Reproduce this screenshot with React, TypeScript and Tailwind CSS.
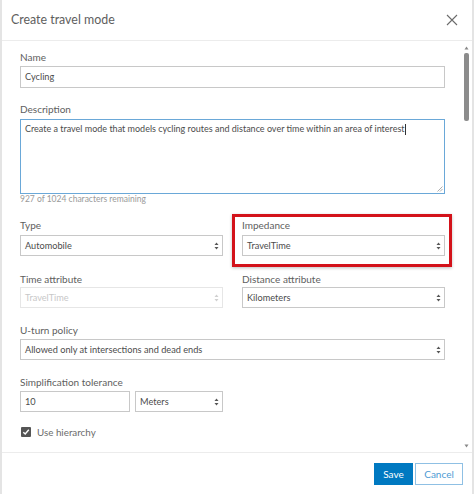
import React from 'react';

const font = { fontFamily: '"Lato", "Noto Sans", sans-serif' };

function Arrows({ disabled = false }: { disabled?: boolean }) {
    const c = disabled ? '#d0d0d0' : '#555';
    return (
        <svg width="5" height="8" viewBox="0 0 5 8" className="shrink-0">
            <path d="M2.5 0.5 L4.5 3 L0.5 3 Z" fill={c} />
            <path d="M2.5 7.5 L4.5 5 L0.5 5 Z" fill={c} />
        </svg>
    );
}

function Label({ children, className = '' }: { children: React.ReactNode; className?: string }) {
    return <div className={`text-[10px] leading-[14px] text-[#5e5e5e] ${className}`}>{children}</div>;
}

function Select({ value, disabled = false, className = '' }: { value: string; disabled?: boolean; className?: string }) {
    return (
        <div className={`h-[21px] flex items-center justify-between pl-[4px] pr-[3px] border ${disabled ? 'border-[#e6e6e6] text-[#c8c8c8]' : 'border-[#c8c8c8] text-[#4c4c4c]'} bg-white text-[9.2px] ${className}`}>
            <span>{value}</span>
            <Arrows disabled={disabled} />
        </div>
    );
}

export default function App() {
    return (
        <div style={font} className="w-[474px] h-[494px] bg-white flex flex-col border-x-[2px] border-[#e4e4e4] overflow-hidden">
            {/* header */}
            <div className="h-[41px] shrink-0 flex items-center justify-between pl-[9px] pr-[14px] border-b border-[#ececec]">
                <span className="text-[12.4px] text-[#5e5e5e]">Create travel mode</span>
                <svg width="12" height="12" viewBox="0 0 12 12">
                    <path d="M1 1 L11 11 M11 1 L1 11" stroke="#6b6b6b" strokeWidth="1.1" />
                </svg>
            </div>

            {/* body */}
            <div className="flex-1 flex min-h-0">
                <div className="flex-1 pl-[18px] pt-[9px]">
                    <div className="w-[425px]">
                        <Label>Name</Label>
                        <div className="mt-[2px] h-[22px] border border-[#c8c8c8] flex items-center pl-[4px] text-[9.2px] text-[#4c4c4c]">Cycling</div>

                        <Label className="mt-[14px]">Description</Label>
                        <div className="mt-[3px] h-[75px] border border-[#6aa8d8] relative pl-[4px] pt-[3px] text-[9px] leading-[12px] text-[#4c4c4c] whitespace-nowrap">
                            <span>Create a travel mode that models cycling routes and distance over time within an area of interest</span>
                            <span className="inline-block w-px h-[11px] bg-[#333] align-middle"></span>
                            <svg width="6" height="6" viewBox="0 0 6 6" className="absolute right-[1px] bottom-[1px]">
                                <path d="M5.5 0.5 L0.5 5.5 M5.5 3 L3 5.5" stroke="#999" strokeWidth="0.8" />
                            </svg>
                        </div>
                        <div className="text-[8.5px] leading-[11px] text-[#9a9a9a]">927 of 1024 characters remaining</div>

                        <div className="mt-[13px] grid grid-cols-2 gap-x-[19px]">
                            <div>
                                <Label>Type</Label>
                                <Select value="Automobile" className="mt-[3px]" />
                            </div>
                            <div className="-ml-[10px] -mr-[7px] -mt-[4px] -mb-[11px] border-[3px] border-[#d3121a] pl-[7px] pr-[4px] pt-[1px] pb-[8px] shadow-[0_1px_3px_rgba(0,0,0,0.25)]">
                                <Label>Impedance</Label>
                                <Select value="TravelTime" className="mt-[3px]" />
                            </div>
                        </div>

                        <div className="mt-[16px] grid grid-cols-2 gap-x-[19px]">
                            <div>
                                <Label>Time attribute</Label>
                                <Select value="TravelTime" disabled className="mt-[1px]" />
                            </div>
                            <div>
                                <Label>Distance attribute</Label>
                                <Select value="Kilometers" className="mt-[1px]" />
                            </div>
                        </div>

                        <Label className="mt-[15px]">U-turn policy</Label>
                        <Select value="Allowed only at intersections and dead ends" className="mt-[2px]" />

                        <Label className="mt-[15px]">Simplification tolerance</Label>
                        <div className="mt-[2px] flex gap-[5px]">
                            <div className="w-[110px] h-[21px] border border-[#c8c8c8] flex items-center pl-[4px] text-[9.2px] text-[#4c4c4c]">10</div>
                            <Select value="Meters" className="w-[88px]" />
                        </div>

                        <div className="mt-[13px] flex items-center gap-[6px] pl-[1px]">
                            <div className="w-[10px] h-[10px] rounded-[1px] bg-[#555] flex items-center justify-center">
                                <svg width="8" height="8" viewBox="0 0 8 8">
                                    <path d="M1.3 4.2 L3.2 6 L6.8 1.8" stroke="white" strokeWidth="1.4" fill="none" />
                                </svg>
                            </div>
                            <span className="text-[9.8px] text-[#6b6b6b]">Use hierarchy</span>
                        </div>
                    </div>
                </div>

                {/* scrollbar */}
                <div className="w-[9px] mr-[1px] flex flex-col items-center pt-[5px] pb-[4px]">
                    <svg width="5" height="4" viewBox="0 0 5 4"><path d="M2.5 0.5 L4.5 3.5 L0.5 3.5 Z" fill="#888" /></svg>
                    <div className="mt-[3px] w-[5px] h-[68px] rounded-[2px] bg-[#8c8c8c]"></div>
                    <div className="flex-1"></div>
                    <svg width="5" height="4" viewBox="0 0 5 4"><path d="M2.5 3.5 L4.5 0.5 L0.5 0.5 Z" fill="#888" /></svg>
                </div>
            </div>

            {/* footer */}
            <div className="h-[42px] shrink-0 border-t border-[#ececec] flex items-start justify-end pt-[10px] pr-[9px] gap-[2px]">
                <button className="w-[39px] h-[22px] bg-[#0079c1] text-white text-[10px]">Save</button>
                <button className="w-[48px] h-[22px] border border-[#8fc0e4] text-[#4d9bd4] text-[10px] bg-white">Cancel</button>
            </div>
        </div>
    );
}
